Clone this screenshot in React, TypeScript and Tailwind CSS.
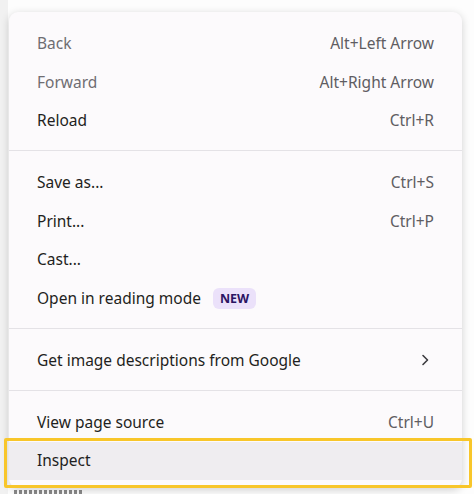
import React from "react";

type Item = { label: string; shortcut?: string; disabled?: boolean; badge?: string; submenu?: boolean };

function Row({ item }: { item: Item }) {
  return (
    <div className="flex h-[38.5px] items-center justify-between pl-[28px] pr-[28px]">
      <div className="flex items-center gap-[12px]">
        <span className={item.disabled ? "text-[#6f6d72]" : "text-[#1f1f21]"}>{item.label}</span>
        {item.badge && (
          <span className="rounded-[6px] bg-[#ebe1fa] px-[7px] py-[2px] text-[12.5px] font-bold leading-[17px] text-[#2b1463]">
            {item.badge}
          </span>
        )}
      </div>
      {item.shortcut && <span className="text-[#5f5d62]">{item.shortcut}</span>}
      {item.submenu && (
        <svg width="10" height="12" viewBox="0 0 10 12" className="mr-[4px]">
          <path d="M3 1.5 L7.5 6 L3 10.5" fill="none" stroke="#3c3b3f" strokeWidth="1.6" strokeLinecap="round" strokeLinejoin="round" />
        </svg>
      )}
    </div>
  );
}

function Sep() {
  return <div className="mb-[12.5px] mt-[10px] h-px bg-[#e4e2e6]" />;
}

export default function App() {
  const g1: Item[] = [
    { label: "Back", shortcut: "Alt+Left Arrow", disabled: true },
    { label: "Forward", shortcut: "Alt+Right Arrow", disabled: true },
    { label: "Reload", shortcut: "Ctrl+R" },
  ];
  const g2: Item[] = [
    { label: "Save as...", shortcut: "Ctrl+S" },
    { label: "Print...", shortcut: "Ctrl+P" },
    { label: "Cast..." },
    { label: "Open in reading mode", badge: "NEW" },
  ];
  return (
    <div className="relative h-[494px] w-[474px] overflow-hidden bg-[#fdfdfd]" style={{ fontFamily: '"Noto Sans", "Open Sans", sans-serif' }}>
      <div className="absolute left-0 top-0 h-full w-[8px] bg-[#f1f1f1]" />
      <div className="absolute left-[14px] top-[490px] flex gap-[2px]">
        {Array.from({ length: 14 }).map((_, i) => (
          <div key={i} className="h-[5px] w-[3px] bg-[#8a8a8a]" />
        ))}
      </div>
      <div className="relative ml-[9px] mt-[12px] w-[453px] rounded-[9px] bg-[#fcfafc] pb-[8px] pt-[12.5px] text-[15.5px] shadow-[0_2px_8px_rgba(0,0,0,0.18)]">
        {g1.map((i) => (
          <Row key={i.label} item={i} />
        ))}
        <Sep />
        {g2.map((i) => (
          <Row key={i.label} item={i} />
        ))}
        <Sep />
        <Row item={{ label: "Get image descriptions from Google", submenu: true }} />
        <Sep />
        <Row item={{ label: "View page source", shortcut: "Ctrl+U" }} />
        <div className="relative bg-[#efedf0]">
          <Row item={{ label: "Inspect" }} />
          <div className="absolute -bottom-[8px] -left-[5px] -right-[10px] -top-[4px] rounded-[2px] border-[3.5px] border-[#f8c62a]" />
        </div>
      </div>
    </div>
  );
}
